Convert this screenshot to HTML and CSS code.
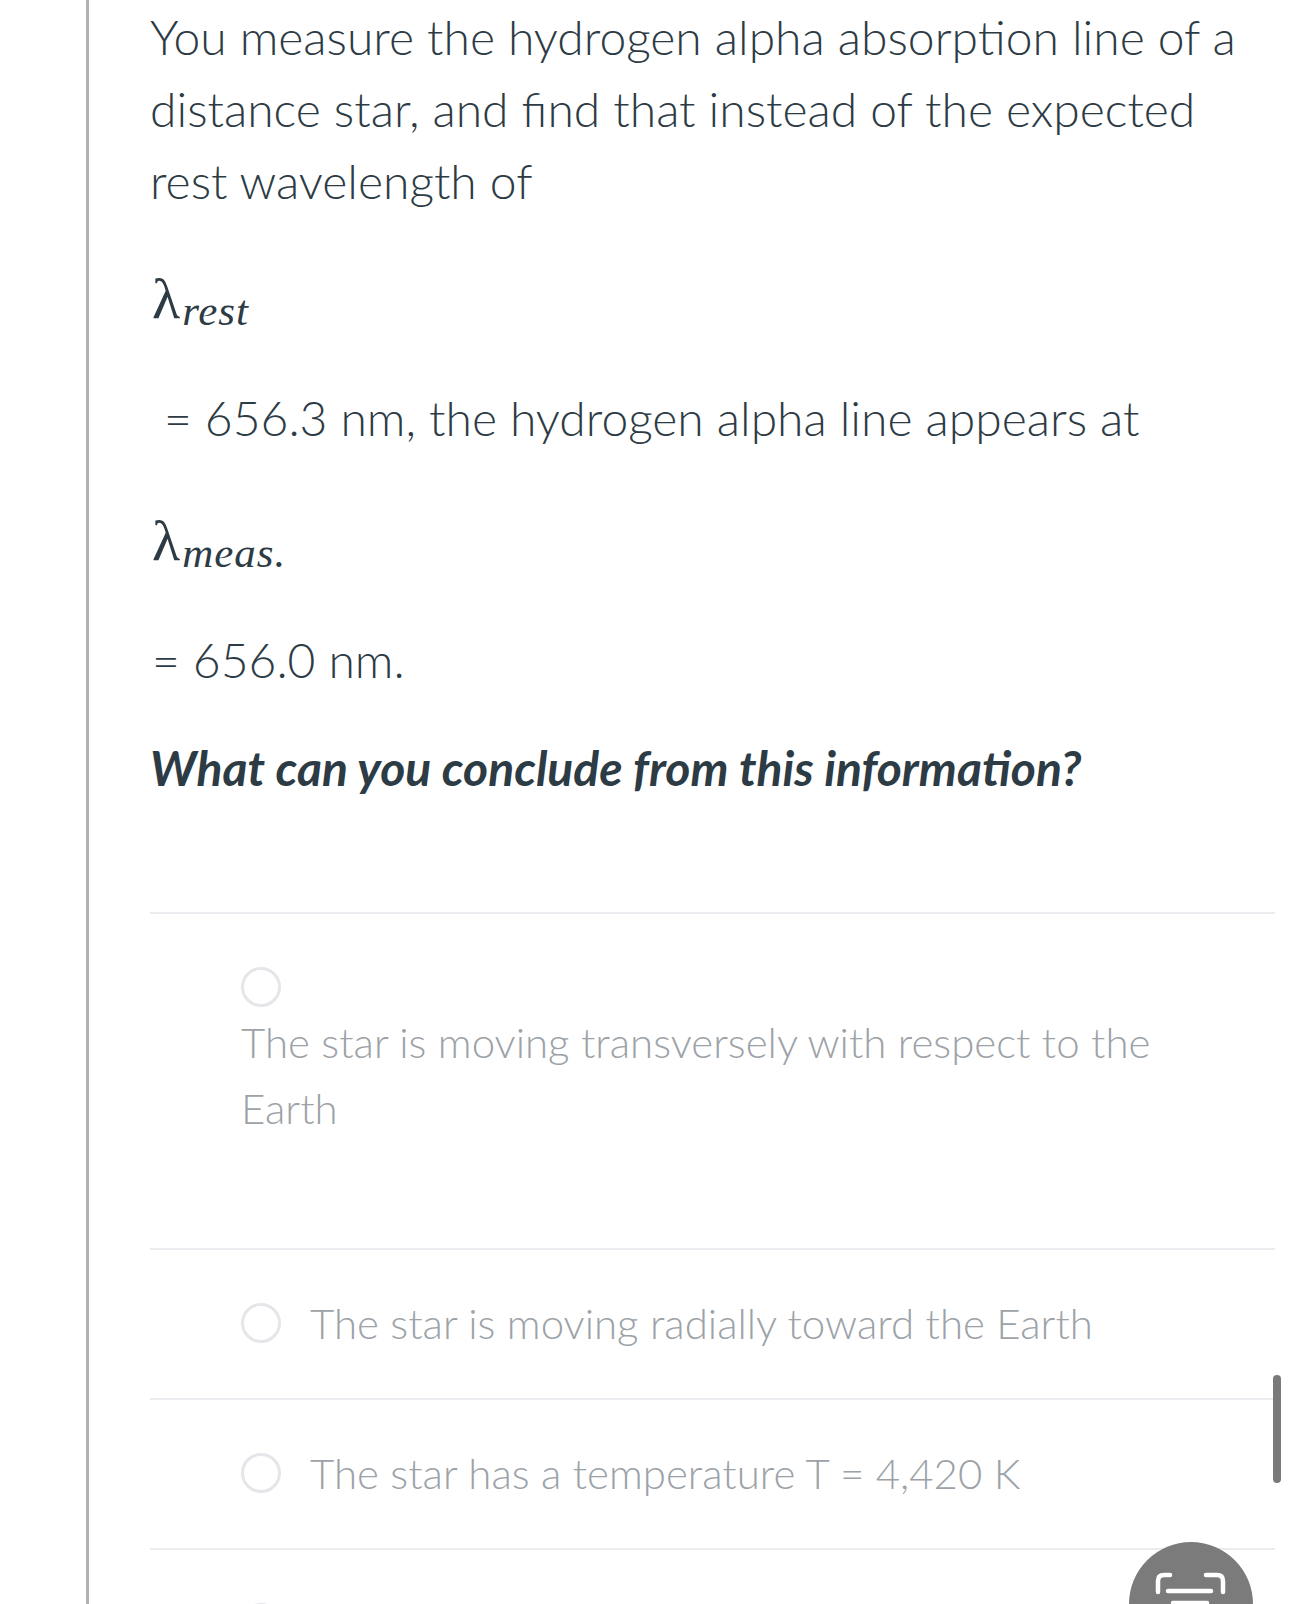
FILE: index.html
```html
<!DOCTYPE html>
<html lang="en">
<head>
<meta charset="utf-8">
<title>Quiz question</title>
<link rel="stylesheet" href="styles.css">
</head>
<body>
<div class="frame">
  <div class="content">
    <p class="text intro">You measure the hydrogen alpha absorption line of a distance star, and find that instead of the expected rest wavelength of</p>
    <div class="math m1"><span class="lam">λ</span><span class="sub">rest</span></div>
    <p class="text eq1">= 656.3 nm, the hydrogen alpha line appears at</p>
    <div class="math m2"><span class="lam">λ</span><span class="sub">meas.</span></div>
    <p class="text eq2">= 656.0 nm.</p>
    <p class="question">What can you conclude from this information?</p>
    <ul class="answers">
      <li class="answer stacked"><span class="radio"></span><span class="label">The star is moving transversely with respect to the Earth</span></li>
      <li class="answer"><span class="radio"></span><span class="label">The star is moving radially toward the Earth</span></li>
      <li class="answer"><span class="radio"></span><span class="label">The star has a temperature T = 4,420 K</span></li>
      <li class="answer"><span class="radio"></span><span class="label">&nbsp;</span></li>
    </ul>
  </div>
</div>
<div class="scroll-thumb"></div>
<div class="live-text">
  <svg width="124" height="124" viewBox="0 0 124 124" fill="none" stroke="#ffffff" stroke-width="4.5" stroke-linecap="round" stroke-linejoin="round">
    <path d="M29 50 V39 Q29 33 35 33 H41"/>
    <path d="M77 33 H88 Q94 33 94 39 V50"/>
    <path d="M39 49 H82"/>
    <path d="M44 61 H78"/>
    <path d="M44 73 H70"/>
    <path d="M29 74 V85 Q29 91 35 91 H41"/>
    <path d="M77 91 H88 Q94 91 94 85 V74"/>
  </svg>
</div>
</body>
</html>
```

FILE: styles.css
```css
html, body {
  margin: 0;
  padding: 0;
  height: 100%;
  overflow: hidden;
  background: #ffffff;
}

.frame {
  margin-left: 86px;
  border-left: 3px solid #b1b1b1;
  min-height: 1604px;
  padding: 0 15px 0 61px;
  box-sizing: border-box;
}

.content {
  font-family: Lato, "Noto Sans", sans-serif;
  color: #2d3b45;
}

.text {
  margin: 0;
  font-size: 48px;
  font-weight: 300;
  line-height: 72px;
}

.intro {
  padding-top: 1px;
  padding-right: 10px;
}

.math {
  font-family: "Liberation Serif", "DejaVu Serif", serif;
  font-style: italic;
  height: 72px;
  font-size: 54px;
  line-height: 72px;
  color: #2d3b45;
  padding-left: 2px;
}

.m1 { margin-top: 47px; }
.m2 { margin-top: 52px; }

.lam {
  font-style: normal;
  font-size: 58px;
  line-height: 0;
}

.sub {
  font-size: 43px;
  line-height: 0;
  vertical-align: -7px;
  letter-spacing: 1px;
  margin-left: 2px;
}

.eq1 {
  margin-top: 46px;
  padding-left: 14px;
}

.eq2 {
  margin-top: 46px;
  padding-left: 2px;
}

.question {
  margin: 36px 0 0;
  font-size: 48px;
  line-height: 72px;
  font-weight: 700;
  font-style: italic;
}

.answers {
  list-style: none;
  margin: 108px 0 0;
  padding: 0;
}

.answer {
  border-top: 2px solid #ececf0;
  display: flex;
  align-items: center;
  padding: 40px 0 42px 91px;
  font-size: 42px;
  font-weight: 300;
  line-height: 66px;
  color: #9ca2a7;
}

.answer.stacked {
  flex-direction: column;
  align-items: flex-start;
  padding-top: 53px;
  padding-bottom: 107px;
}

.radio {
  flex: none;
  width: 40px;
  height: 40px;
  box-sizing: border-box;
  border: 3px solid #e6e5e9;
  border-radius: 50%;
  margin-right: 29px;
}

.stacked .radio {
  margin-bottom: 2px;
}

.stacked .label {
  padding-right: 20px;
}

.scroll-thumb {
  position: fixed;
  left: 1273px;
  top: 1375px;
  width: 8px;
  height: 108px;
  border-radius: 4px;
  background: #7a7a7a;
}

.live-text {
  position: fixed;
  left: 1129px;
  top: 1542px;
  width: 124px;
  height: 124px;
  border-radius: 50%;
  background: #7b7b7b;
}

.live-text svg {
  display: block;
}
```
